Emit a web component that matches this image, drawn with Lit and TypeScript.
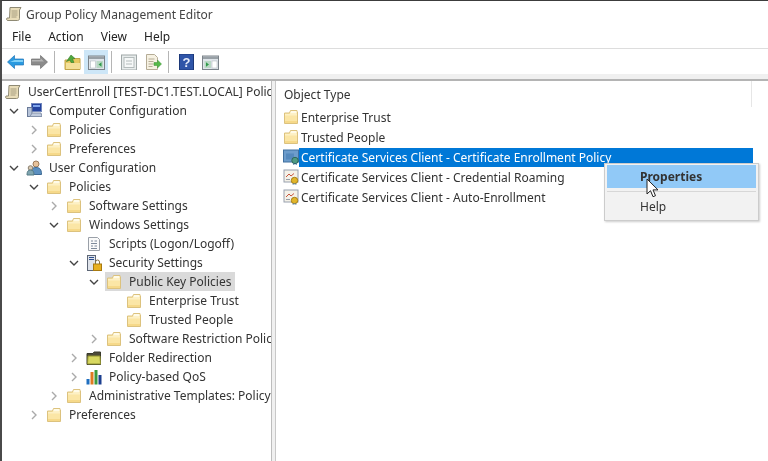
import { LitElement, html, svg, css, nothing } from "lit";
import { customElement } from "lit/decorators.js";

const icons: Record<string, unknown> = {
  folder: svg`<path d="M1.500 4h5l1-2.500h6.500V3h.500v11.500h-13z" fill="#fbe6a6" stroke="#dcc27e"/><path d="M8 2h5.500v2.500H7z" fill="#fffbe8"/><path d="M2 5h12v1.500H2z" fill="#fdf0c4"/><path d="M2 12h12v2H2z" fill="#f6d98a"/>`,
  scroll: svg`<path d="M4 1.500h11l-1.500 2.500v8.500c0 1.500-1 2-2 2H2c-1.500 0-1.800-1.500-1-2.500h2.500z" fill="#e9ddb9" stroke="#8f8a74"/><path d="M5.500 5h6M5.500 7h6M5.500 9h6M5.500 11h5" stroke="#a59c7e" fill="none"/>`,
  computer: svg`<rect x="5.500" y="0.500" width="10" height="8" fill="#24439f" stroke="#7287bd"/><path d="M7 2h7v2H7z" fill="#7fa4ea"/><rect x="1.500" y="4.500" width="4.500" height="9" fill="#b6c3d8" stroke="#6a7a98"/><path d="M6 10h9l1 3.500H4z" fill="#c0cbdd" stroke="#8593ab"/>`,
  users: svg`<circle cx="10" cy="4" r="3" fill="#e8c29a" stroke="#9c7a5a"/><path d="M5 14.500c0-5.500 1.500-7 5-7s5.500 1.500 5.500 7z" fill="#5b8fc0" stroke="#3e6a94"/><circle cx="4.500" cy="8" r="2.300" fill="#d8c8b0" stroke="#8a8070"/><path d="M1 15c0-3.500 1-5 3.500-5S8 11.500 8 15z" fill="#7fa5b0" stroke="#557a85"/>`,
  script: svg`<path d="M2.500 1.500h9l2 2v11h-11z" fill="#fafafa" stroke="#9aa0a8"/><path d="M5 5h2M8.500 5h2.500M5 7.500h6M5 10h2M8.500 10h2.500M5 12.500h6" stroke="#7e8a9a" fill="none"/>`,
  security: svg`<rect x="1.500" y="0.500" width="8" height="15" fill="#dfe3ea" stroke="#5d6675"/><path d="M3 2.500h5M3 4.500h5" stroke="#2d4f8f" fill="none"/><rect x="7.500" y="9" width="8" height="6.500" fill="#e8b020" stroke="#a87a10"/><path d="M9.500 9V7a2 2 0 0 1 4 0v2" stroke="#8a7040" fill="none"/>`,
  redirect: svg`<path d="M1 3.500h6l1-1.500h6.500v12.500H1z" fill="#4c4a38" stroke="#3a3a2c"/><path d="M2 6h12l0.500 8H1.500z" fill="#d8d860" stroke="#8f9030"/>`,
  qos: svg`<rect x="0.500" y="10" width="3" height="5.500" fill="#1f6fc0"/><rect x="4.500" y="3" width="3" height="12.500" fill="#e07a20"/><rect x="8.500" y="1" width="3" height="14.500" fill="#3d9a3d"/><rect x="12.500" y="6" width="3" height="9.500" fill="#1c3f8f"/>`,
  cert: svg`<rect x="1" y="1" width="14" height="12" fill="#f4f1e8" stroke="#98a0ae"/><path d="M3 8l3-3 2 2 3-2.500" stroke="#c8553d" fill="none"/><path d="M3 10.500h4" stroke="#9aa0a8" fill="none"/><circle cx="11.500" cy="11.500" r="3.200" fill="#e2b62a" stroke="#a5801a"/><path d="M10 14.500l-0.500 1.500 2-1 2 1-0.500-1.500" fill="#4c7fb0"/>`,
  certSel: svg`<rect x="0.500" y="1" width="15" height="12" fill="#6d9ccb" stroke="#41709f"/><path d="M3 4.500h8v6H3z" fill="#5589bd"/><circle cx="12" cy="11.500" r="3.200" fill="#4f9a83" stroke="#2f6a5a"/><path d="M10.500 14.500l-0.500 1.500 2-1 2 1-0.500-1.500" fill="#2d5f8f"/>`,
  back: svg`<path d="M0.500 8L7.500 1.500v3.500h9v6h-9v3.500z" fill="#2a9ae0" stroke="#1f74b8" stroke-width="0.700"/><path d="M7.500 6h8.500v2H3z" fill="#7fd0f7"/>`,
  forward: svg`<path d="M16.500 8l-7-6.500v3.500h-9v6h9v3.500z" fill="#8b8b8b" stroke="#707070" stroke-width="0.700"/><path d="M1 6h8.500V4L13 7.500H1z" fill="#b4b4b4"/>`,
  upFolder: svg`<path d="M1 6h5l1-1.500h9v11H1z" fill="#e8c860" stroke="#c2a44a"/><path d="M2 9h14v6H2z" fill="#f4e098"/><path d="M2.500 7.500L7 1l4 3.500-2.500 .5 1.500 3.500H7L6 6z" fill="#4fa83d" stroke="#367a2a" stroke-width="0.600"/>`,
  pane: svg`<rect x="0.500" y="2" width="16" height="13.500" fill="#dfe5ea" stroke="#7c838a"/><path d="M1 2.500h15V5H1z" fill="#98a0a6"/><rect x="2.500" y="7" width="5" height="7" fill="#fff" stroke="#aab2b8" stroke-width="0.500"/><rect x="8.500" y="7" width="6.500" height="7" fill="#b9d8c4"/><path d="M13.500 8.200l-3 2.300 3 2.300z" fill="#2f9a4a"/>`,
  props: svg`<rect x="0.500" y="1" width="15" height="15" fill="#e8ecec" stroke="#a0a8a8"/><rect x="3" y="3.500" width="10" height="10" fill="#f6f8f8" stroke="#b4bcbc"/><path d="M5 7h6M5 10h6" stroke="#b4bcbc" fill="none"/>`,
  exportList: svg`<path d="M1.500 0.500h8l3 3v12h-11z" fill="#f6f1e2" stroke="#b5ac96"/><path d="M3.500 5h6M3.500 7.500h5M3.500 10h5M3.500 12.500h4" stroke="#b5ac96" fill="none"/><path d="M9 8.500h3.500V6l4 4-4 4v-2.500H9z" fill="#54b948" stroke="#3f9136" stroke-width="0.500"/>`,
  help: svg`<rect x="0.500" y="0" width="14" height="16" fill="#2f55a8" stroke="#1c3878"/><text x="7.500" y="13" text-anchor="middle" font-size="13" font-weight="700" font-family="Liberation Sans, sans-serif" fill="#e6ecfa">?</text>`,
  paneRight: svg`<rect x="0.500" y="2" width="16" height="13.500" fill="#dfe5ea" stroke="#7c838a"/><path d="M1 2.500h15V5H1z" fill="#98a0a6"/><rect x="2.500" y="7" width="6.500" height="7" fill="#b9d8c4"/><rect x="10" y="7" width="5" height="7" fill="#fff" stroke="#aab2b8" stroke-width="0.500"/><path d="M4 8.200l3 2.300-3 2.300z" fill="#2f9a4a"/>`,
};

const icon = (name: string, size = 16) => html`<svg
  width=${size}
  height="16"
  viewBox="0 0 ${size} 16"
  aria-hidden="true"
>${icons[name]}</svg>`;

type Node = { label: string; depth: number; icon: string; arrow?: "open" | "closed"; selected?: boolean };

const tree: Node[] = [
  { label: "UserCertEnroll [TEST-DC1.TEST.LOCAL] Policy", depth: 0, icon: "scroll" },
  { label: "Computer Configuration", depth: 1, icon: "computer", arrow: "open" },
  { label: "Policies", depth: 2, icon: "folder", arrow: "closed" },
  { label: "Preferences", depth: 2, icon: "folder", arrow: "closed" },
  { label: "User Configuration", depth: 1, icon: "users", arrow: "open" },
  { label: "Policies", depth: 2, icon: "folder", arrow: "open" },
  { label: "Software Settings", depth: 3, icon: "folder", arrow: "closed" },
  { label: "Windows Settings", depth: 3, icon: "folder", arrow: "open" },
  { label: "Scripts (Logon/Logoff)", depth: 4, icon: "script" },
  { label: "Security Settings", depth: 4, icon: "security", arrow: "open" },
  { label: "Public Key Policies", depth: 5, icon: "folder", arrow: "open", selected: true },
  { label: "Enterprise Trust", depth: 6, icon: "folder" },
  { label: "Trusted People", depth: 6, icon: "folder" },
  { label: "Software Restriction Policies", depth: 5, icon: "folder", arrow: "closed" },
  { label: "Folder Redirection", depth: 4, icon: "redirect", arrow: "closed" },
  { label: "Policy-based QoS", depth: 4, icon: "qos", arrow: "closed" },
  { label: "Administrative Templates: Policy definitions", depth: 3, icon: "folder", arrow: "closed" },
  { label: "Preferences", depth: 2, icon: "folder", arrow: "closed" },
];

const objects = [
  { label: "Enterprise Trust", icon: "folder" },
  { label: "Trusted People", icon: "folder" },
  { label: "Certificate Services Client - Certificate Enrollment Policy", icon: "certSel", selected: true },
  { label: "Certificate Services Client - Credential Roaming", icon: "cert" },
  { label: "Certificate Services Client - Auto-Enrollment", icon: "cert" },
];

@customElement("app-root")
export class AppRoot extends LitElement {
  static styles = css`
    :host {
      display: flex;
      flex-direction: column;
      position: relative;
      width: 768px;
      height: 461px;
      box-sizing: border-box;
      overflow: hidden;
      background: #fff;
      border-top: 1px solid #3c3c3c;
      border-left: 2px solid #4a4a4a;
      font-family: "Noto Sans", "Open Sans", sans-serif;
      font-size: 12px;
      color: #333;
      filter: blur(0.35px);
    }
    svg {
      display: block;
      flex: none;
    }
    .title {
      display: flex;
      align-items: center;
      gap: 4px;
      height: 26px;
      padding-left: 4px;
      color: #444;
    }
    .menu {
      display: flex;
      height: 22px;
      box-sizing: border-box;
      padding: 0 0 2px 10px;
      align-items: center;
      gap: 17px;
      border-bottom: 1px solid #ddd;
      color: #222;
    }
    .toolbar {
      display: flex;
      align-items: center;
      height: 24px;
      padding: 1px 0 0 1px;
    }
    .tool {
      display: flex;
      align-items: center;
      justify-content: center;
      width: 24px;
      height: 24px;
    }
    .tool.active {
      background: #cde6f7;
    }
    .sep {
      width: 1px;
      height: 22px;
      margin: 0 5px 0 3px;
      background: #b5b5b5;
    }
    .tb-gap {
      height: 5px;
      background: #f0f0f0;
    }
    .rule {
      height: 2px;
      background: #b4b4b4;
    }
    .panes {
      flex: 1;
      min-height: 0;
      display: flex;
    }
    .left {
      width: 269px;
      flex: none;
      padding-top: 1px;
      overflow: hidden;
    }
    .splitter {
      width: 5px;
      flex: none;
      box-sizing: border-box;
      background: #f0f0f0;
      border-left: 1px solid #bdbdbd;
      border-right: 1px solid #c8c8c8;
    }
    .row {
      display: flex;
      align-items: center;
      height: 19px;
      white-space: nowrap;
    }
    .arrow {
      width: 12px;
      height: 12px;
      margin-right: 6px;
      flex: none;
    }
    .arrow path {
      fill: none;
      stroke-width: 1.4;
    }
    .arrow.open path {
      stroke: #444;
    }
    .arrow.closed path {
      stroke: #aaa;
    }
    .row .label {
      margin-left: 3px;
      padding: 0 4px;
      line-height: 19px;
    }
    .row.selected .hl {
      display: flex;
      align-items: center;
      background: #dadada;
      height: 19px;
      margin-left: -1px;
      padding-left: 1px;
    }
    .right {
      flex: 1;
      min-width: 0;
      display: flex;
      flex-direction: column;
    }
    .head {
      display: flex;
      height: 26px;
    }
    .head-cell {
      width: 476px;
      box-sizing: border-box;
      padding: 5px 0 0 8px;
      border-right: 1px solid #e6e6e6;
    }
    .list {
      padding-left: 7px;
    }
    .item {
      display: flex;
      align-items: center;
      height: 20px;
      white-space: nowrap;
    }
    .item span {
      flex: 1;
      padding-left: 2px;
      margin-right: 15px;
      line-height: 19px;
    }
    .item.selected span {
      background: #0078d7;
      color: #fff;
    }
    .ctx {
      position: absolute;
      left: 602px;
      top: 162px;
      width: 155px;
      height: 58px;
      box-sizing: border-box;
      padding: 1px 2px;
      background: #f2f2f2;
      border: 1px solid #ccc;
      box-shadow: 1px 1px 2px rgba(0, 0, 0, 0.2);
      color: #333;
    }
    .ctx-item {
      height: 22px;
      line-height: 24px;
      padding-left: 33px;
    }
    .ctx-item.hot {
      height: 23px;
      line-height: 23px;
      background: #91c9f7;
      font-weight: 700;
    }
    .ctx-sep {
      height: 1px;
      margin: 3px 0;
      background: #d7d7d7;
    }
    .cursor {
      position: absolute;
      left: 644px;
      top: 177px;
    }
  `;

  private renderNode(n: Node) {
    const pad = n.depth === 0 ? 3 : 6 + 20 * (n.depth - 1);
    const content = html`${icon(n.icon)}<span class="label">${n.label}</span>`;
    return html`<div class="row ${n.selected ? "selected" : ""}" style="padding-left:${pad}px">
      ${n.depth === 0
        ? nothing
        : html`<svg class="arrow ${n.arrow ?? ""}" viewBox="0 0 12 12">
            ${n.arrow === "open"
              ? svg`<path d="M2 4l4 4 4-4"/>`
              : n.arrow === "closed"
                ? svg`<path d="M4 2l4 4-4 4"/>`
                : nothing}
          </svg>`}
      ${n.selected ? html`<div class="hl">${content}</div>` : content}
    </div>`;
  }

  render() {
    return html`
      <div class="title">${icon("scroll")}<span>Group Policy Management Editor</span></div>
      <div class="menu"><span>File</span><span>Action</span><span>View</span><span>Help</span></div>
      <div class="toolbar">
        <div class="tool">${icon("back", 17)}</div>
        <div class="tool">${icon("forward", 17)}</div>
        <div class="sep"></div>
        <div class="tool">${icon("upFolder", 17)}</div>
        <div class="tool active">${icon("pane", 17)}</div>
        <div class="sep"></div>
        <div class="tool">${icon("props")}</div>
        <div class="tool">${icon("exportList", 17)}</div>
        <div class="sep"></div>
        <div class="tool">${icon("help", 15)}</div>
        <div class="tool">${icon("paneRight", 17)}</div>
      </div>
      <div class="tb-gap"></div>
      <div class="rule"></div>
      <div class="panes">
        <div class="left">${tree.map((n) => this.renderNode(n))}</div>
        <div class="splitter"></div>
        <div class="right">
          <div class="head"><div class="head-cell">Object Type</div></div>
          <div class="list">
            ${objects.map(
              (o) => html`<div class="item ${o.selected ? "selected" : ""}">
                ${icon(o.icon)}<span>${o.label}</span>
              </div>`,
            )}
          </div>
        </div>
      </div>
      <div class="ctx">
        <div class="ctx-item hot">Properties</div>
        <div class="ctx-sep"></div>
        <div class="ctx-item">Help</div>
      </div>
      <svg class="cursor" width="14" height="21" viewBox="0 0 14 21">
        <path d="M1 1v15l3.500-3.300 2.500 6 2.500-1-2.500-5.800h5z" fill="#fff" stroke="#222"/>
      </svg>
    `;
  }
}
